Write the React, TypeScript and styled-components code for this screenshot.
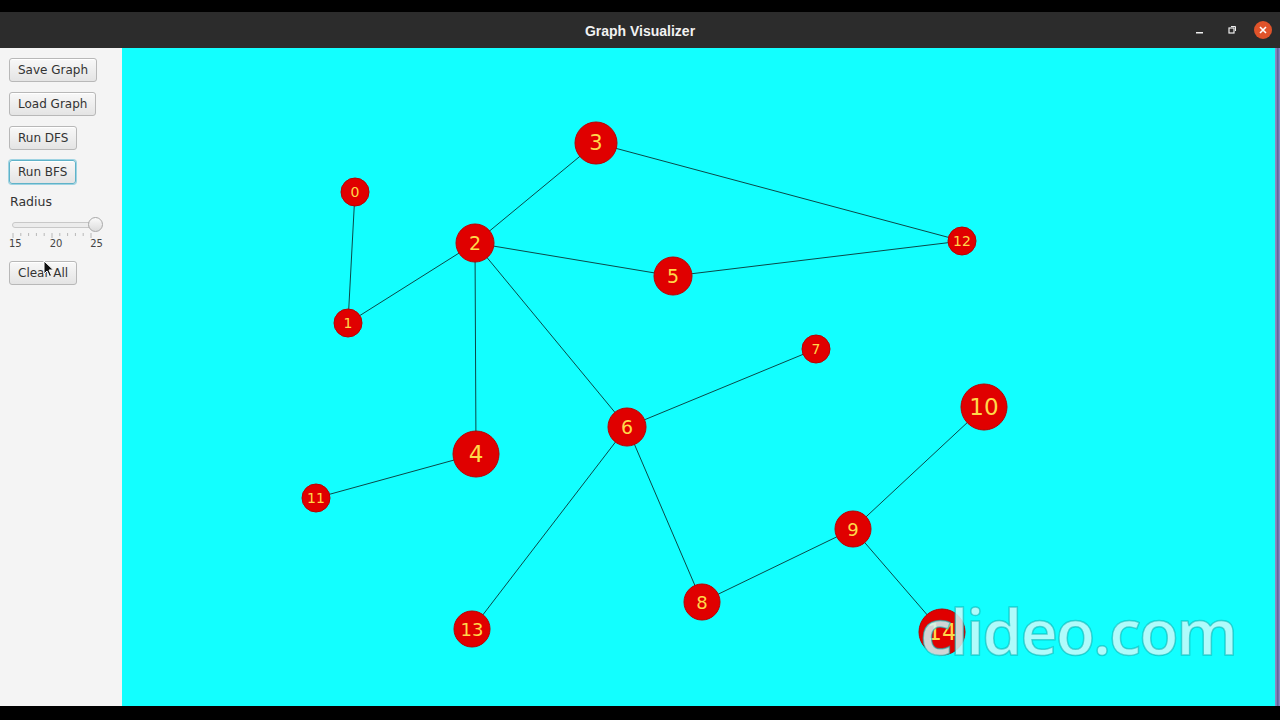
import React from "react";
import styled, { createGlobalStyle } from "styled-components";

const Global = createGlobalStyle`
  html, body { margin: 0; padding: 0; background: #000; }
  #root { width: 1280px; height: 720px; overflow: hidden; }
`;

const Screen = styled.div`
  width: 1280px;
  height: 720px;
  display: flex;
  flex-direction: column;
  background: #000;
  font-family: "DejaVu Sans", sans-serif;
`;

const TopStrip = styled.div`
  height: 12px;
  background: #000;
  flex: none;
`;

const BottomStrip = styled.div`
  height: 14px;
  background: #000;
  flex: none;
`;

const TitleBar = styled.div`
  height: 36px;
  flex: none;
  background: #2c2c2c;
  display: grid;
  grid-template-columns: 1fr auto 1fr;
  align-items: center;
  color: #fff;
`;

const Title = styled.div`
  grid-column: 2;
  font-family: "Liberation Sans", sans-serif;
  font-weight: bold;
  font-size: 14px;
  color: #f2f2f2;
  padding-top: 1px;
`;

const WinControls = styled.div`
  grid-column: 3;
  justify-self: end;
  display: flex;
  align-items: center;
  gap: 13px;
  padding-right: 8px;
`;

const CtrlIcon = styled.div`
  width: 19px;
  height: 19px;
  display: flex;
  align-items: center;
  justify-content: center;
`;

const CloseBtn = styled.div`
  width: 18px;
  height: 18px;
  border-radius: 50%;
  background: #e0532a;
  display: flex;
  align-items: center;
  justify-content: center;
`;

const Main = styled.div`
  flex: 1;
  display: flex;
  min-height: 0;
`;

const Sidebar = styled.div`
  width: 122px;
  flex: none;
  background: #f4f4f4;
  display: flex;
  flex-direction: column;
  align-items: flex-start;
  padding: 10px 0 0 9px;
  box-sizing: border-box;
  position: relative;
`;

const Button = styled.button<{ $focused?: boolean; $mt?: number }>`
  margin-top: ${(p) => p.$mt ?? 0}px;
  height: 24px;
  padding: 0 8px;
  font-family: "DejaVu Sans", sans-serif;
  font-size: 12px;
  color: #333;
  border-radius: 3px;
  background: linear-gradient(#f8f8f8, #e4e4e4);
  border: 1px solid ${(p) => (p.$focused ? "#5fb3c9" : "#b8b8b8")};
  box-shadow: ${(p) =>
    p.$focused ? "0 0 0 1px #9fd3e2, inset 0 1px 0 #fff" : "inset 0 1px 0 #fff"};
  box-sizing: border-box;
  cursor: default;
`;

const Label = styled.div`
  margin-top: 10px;
  margin-left: 1px;
  font-size: 12.5px;
  color: #333;
`;

const SliderBox = styled.div`
  margin-top: 8px;
  margin-left: 3px;
  width: 92px;
  display: flex;
  flex-direction: column;
`;

const TrackRow = styled.div`
  position: relative;
  height: 16px;
  display: flex;
  align-items: center;
`;

const Track = styled.div`
  width: 88px;
  height: 4px;
  border-radius: 3px;
  background: #ececec;
  border: 1px solid #c8c8c8;
`;

const Thumb = styled.div`
  position: absolute;
  left: 76px;
  top: 0;
  width: 15px;
  height: 15px;
  border-radius: 50%;
  background: linear-gradient(#fafafa, #dcdcdc);
  border: 1px solid #a8a8a8;
  box-sizing: border-box;
`;

const TickLabels = styled.div`
  display: flex;
  justify-content: space-between;
  width: 94px;
  margin-left: -3px;
  font-size: 10px;
  color: #444;
  margin-top: -1px;
`;

const Cursor = styled.svg`
  position: absolute;
  left: 43px;
  top: 212px;
`;

const Canvas = styled.div`
  flex: 1;
  background: #12ffff;
  position: relative;
  overflow: hidden;
`;

const Watermark = styled.div`
  position: absolute;
  left: 798px;
  top: 551px;
  font-family: "Noto Sans", sans-serif;
  font-size: 64px;
  font-weight: 600;
  letter-spacing: -2px;
  color: rgba(205, 250, 250, 0.85);
  -webkit-text-stroke: 1.5px rgba(0, 175, 175, 0.55);
  line-height: 1;
`;

const RightStrip = styled.div`
  width: 5px;
  flex: none;
  background: repeating-linear-gradient(
    90deg,
    #3a3f8a 0px,
    #d8d8ff 1px,
    #2a2a6a 2px,
    #9aa0d0 3px,
    #444488 4px
  );
`;

type Node = { id: number; x: number; y: number; r: number };

const nodes: Node[] = [
  { id: 0, x: 355, y: 192, r: 14 },
  { id: 1, x: 348, y: 323, r: 14 },
  { id: 2, x: 475, y: 243, r: 19 },
  { id: 3, x: 596, y: 143, r: 21 },
  { id: 4, x: 476, y: 454, r: 23 },
  { id: 5, x: 673, y: 276, r: 19 },
  { id: 6, x: 627, y: 427, r: 19 },
  { id: 7, x: 816, y: 349, r: 14 },
  { id: 8, x: 702, y: 602, r: 18 },
  { id: 9, x: 853, y: 529, r: 18 },
  { id: 10, x: 984, y: 407, r: 23 },
  { id: 11, x: 316, y: 498, r: 14 },
  { id: 12, x: 962, y: 241, r: 14 },
  { id: 13, x: 472, y: 629, r: 18 },
  { id: 14, x: 942, y: 632, r: 23 },
];

const edges: [number, number][] = [
  [0, 1],
  [1, 2],
  [2, 3],
  [2, 5],
  [2, 4],
  [2, 6],
  [3, 12],
  [5, 12],
  [6, 7],
  [6, 13],
  [6, 8],
  [4, 11],
  [8, 9],
  [9, 10],
  [9, 14],
];

const Graph = () => (
  <svg width="1153" height="658" style={{ display: "block" }}>
    <g transform="translate(-122,-48)">
      {edges.map(([a, b], i) => (
        <line
          key={i}
          x1={nodes[a].x}
          y1={nodes[a].y}
          x2={nodes[b].x}
          y2={nodes[b].y}
          stroke="#0b4848"
          strokeWidth={1}
        />
      ))}
      {nodes.map((n) => (
        <g key={n.id}>
          <circle cx={n.x} cy={n.y} r={n.r} fill="#e00000" stroke="#b80000" strokeWidth={1} />
          <text
            x={n.x}
            y={n.y}
            textAnchor="middle"
            dominantBaseline="central"
            fill="#ffd84a"
            fontFamily="DejaVu Sans, sans-serif"
            fontSize={n.r * 1.0}
          >
            {n.id}
          </text>
        </g>
      ))}
    </g>
  </svg>
);

export default function App() {
  return (
    <>
      <Global />
      <Screen>
        <TopStrip />
        <TitleBar>
          <Title>Graph Visualizer</Title>
          <WinControls>
            <CtrlIcon>
              <svg width="10" height="10" viewBox="0 0 10 10">
                <rect x="1" y="7" width="7" height="1.5" fill="#eee" />
              </svg>
            </CtrlIcon>
            <CtrlIcon>
              <svg width="10" height="10" viewBox="0 0 10 10">
                <rect x="2" y="3" width="5" height="5" fill="none" stroke="#eee" strokeWidth="1.2" />
                <path d="M4 1.5 H8.5 V6" fill="none" stroke="#eee" strokeWidth="1" />
              </svg>
            </CtrlIcon>
            <CloseBtn>
              <svg width="10" height="10" viewBox="0 0 10 10">
                <path d="M2 2 L8 8 M8 2 L2 8" stroke="#fff" strokeWidth="1.6" />
              </svg>
            </CloseBtn>
          </WinControls>
        </TitleBar>
        <Main>
          <Sidebar>
            <Button>Save Graph</Button>
            <Button $mt={10}>Load Graph</Button>
            <Button $mt={10}>Run DFS</Button>
            <Button $mt={10} $focused>
              Run BFS
            </Button>
            <Label>Radius</Label>
            <SliderBox>
              <TrackRow>
                <Track />
                <Thumb />
              </TrackRow>
              <svg width="92" height="6" style={{ display: "block" }}>
                {Array.from({ length: 11 }).map((_, i) => {
                  const x = 1 + i * 7.8;
                  const major = i % 5 === 0;
                  return (
                    <line
                      key={i}
                      x1={x}
                      x2={x}
                      y1={0}
                      y2={major ? 5 : 3}
                      stroke="#b8b8b8"
                      strokeWidth={1}
                    />
                  );
                })}
              </svg>
              <TickLabels>
                <span>15</span>
                <span>20</span>
                <span>25</span>
              </TickLabels>
            </SliderBox>
            <Button $mt={12}>Clear All</Button>
            <Cursor width="12" height="18" viewBox="0 0 12 18">
              <path d="M1 1 L1 14 L4 11 L6.5 16.5 L8.5 15.5 L6 10 L10.5 10 Z" fill="#111" stroke="#fff" strokeWidth="1" />
            </Cursor>
          </Sidebar>
          <Canvas>
            <Graph />
            <Watermark>clideo.com</Watermark>
          </Canvas>
          <RightStrip />
        </Main>
        <BottomStrip />
      </Screen>
    </>
  );
}
